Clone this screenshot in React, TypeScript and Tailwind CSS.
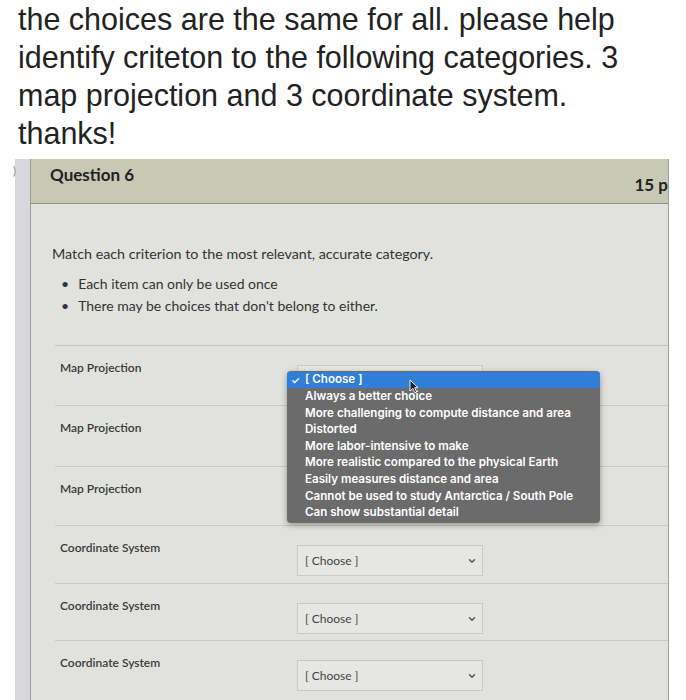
import { ChevronDown } from "lucide-react"

const options = [
  "Always a better choice",
  "More challenging to compute distance and area",
  "Distorted",
  "More labor-intensive to make",
  "More realistic compared to the physical Earth",
  "Easily measures distance and area",
  "Cannot be used to study Antarctica / South Pole",
  "Can show substantial detail",
]

const rows = [
  { label: "Map Projection", h: "h-[60px]" },
  { label: "Map Projection", h: "h-[61px]" },
  { label: "Map Projection", h: "h-[59px]" },
  { label: "Coordinate System", h: "h-[58px]" },
  { label: "Coordinate System", h: "h-[57px]" },
  { label: "Coordinate System", h: "h-[60px]" },
]

const Select = () => (
  <div className="mt-[19px] h-[31px] w-[186px] border border-[#c9cac5] bg-[#e6e7e3] flex items-center justify-between pl-[7px] pr-[5px]">
    <span className="text-[12px] text-[#444]">[ Choose ]</span>
    <ChevronDown size={10} strokeWidth={3.5} className="text-[#555]" />
  </div>
)

export default function App() {
  return (
    <div className="w-[686px] h-[700px] bg-white overflow-hidden">
      <p className="px-[18px] text-[30.5px] leading-[38px] text-[#222] whitespace-nowrap font-['Liberation_Sans',Arial,sans-serif]">
        the choices are the same for all. please help
        <br />
        identify criteton to the following categories. 3
        <br />
        map projection and 3 coordinate system.
        <br />
        thanks!
      </p>

      <div className="flex h-[541px] mt-[7px] font-['Lato','Open_Sans',sans-serif]">
        <div className="w-[15px] bg-white" />
        <div className="w-[16px] bg-[#d8d8dc] border-r border-[#9b9b9b] relative">
          <span className="absolute left-[-2px] top-[4px] text-[11px] text-[#888]">)</span>
        </div>

        <div className="flex-1 flex flex-col border-r border-[#9d9d9d]">
          <div className="h-[45px] shrink-0 bg-[#c7c9b4] border-b border-[#8e9080] flex justify-between pl-[19px] pr-0">
            <span className="pt-[3px] text-[17px] font-bold text-[#222]">Question 6</span>
            <span className="pt-[13px] text-[17px] font-bold text-[#222]">15 p</span>
          </div>

          <div className="flex-1 bg-[#e1e2de] pt-[40px] pl-[21px] text-[#333]">
            <p className="text-[14.3px] leading-[20px]">Match each criterion to the most relevant, accurate category.</p>
            <ul className="mt-[9px] pl-[9px] text-[14px] leading-[22px]">
              <li className="flex gap-[9px]"><span>•</span>Each item can only be used once</li>
              <li className="flex gap-[9px]"><span>•</span>There may be choices that don't belong to either.</li>
            </ul>

            <div className="relative mt-[28px] ml-[3px] border-t border-[#c4c5c1]">
              {rows.map((r, i) => (
                <div key={i} className={`${r.h} flex ${i < 5 ? "border-b border-[#c9cac6]" : ""}`}>
                  <div className="w-[242px] pl-[5px] pt-[14px] text-[12px] leading-[16px] font-semibold text-[#3a3a3a]">
                    {r.label}
                  </div>
                  <Select />
                </div>
              ))}

              <div className="absolute left-[232px] top-[25px] w-[313px] h-[152px] rounded-[4px] bg-[#6b6b6b] shadow-[0_2px_6px_rgba(0,0,0,0.35)] pt-[1px] text-white font-['Inter','Noto_Sans',sans-serif] text-[11.6px] font-semibold">
                <div className="h-[16px] bg-[#2f7ed8] flex items-center pl-[4px] rounded-t-[3px]">
                  <span className="w-[14px] text-[10px]">✓</span>
                  <span>[ Choose ]</span>
                </div>
                {options.map((o) => (
                  <div key={o} className="h-[16.6px] leading-[16.6px] pl-[18px] whitespace-nowrap">
                    {o}
                  </div>
                ))}
                <svg className="absolute left-[122px] top-[8px]" width="10" height="15" viewBox="0 0 10 15">
                  <path d="M1 1 L1 12 L3.8 9.4 L5.8 13.8 L7.6 13 L5.7 8.7 L9 8.7 Z" fill="#222" stroke="#fff" strokeWidth="0.9" />
                </svg>
              </div>
            </div>
          </div>
        </div>

        <div className="w-[17px] bg-white" />
      </div>
    </div>
  )
}
